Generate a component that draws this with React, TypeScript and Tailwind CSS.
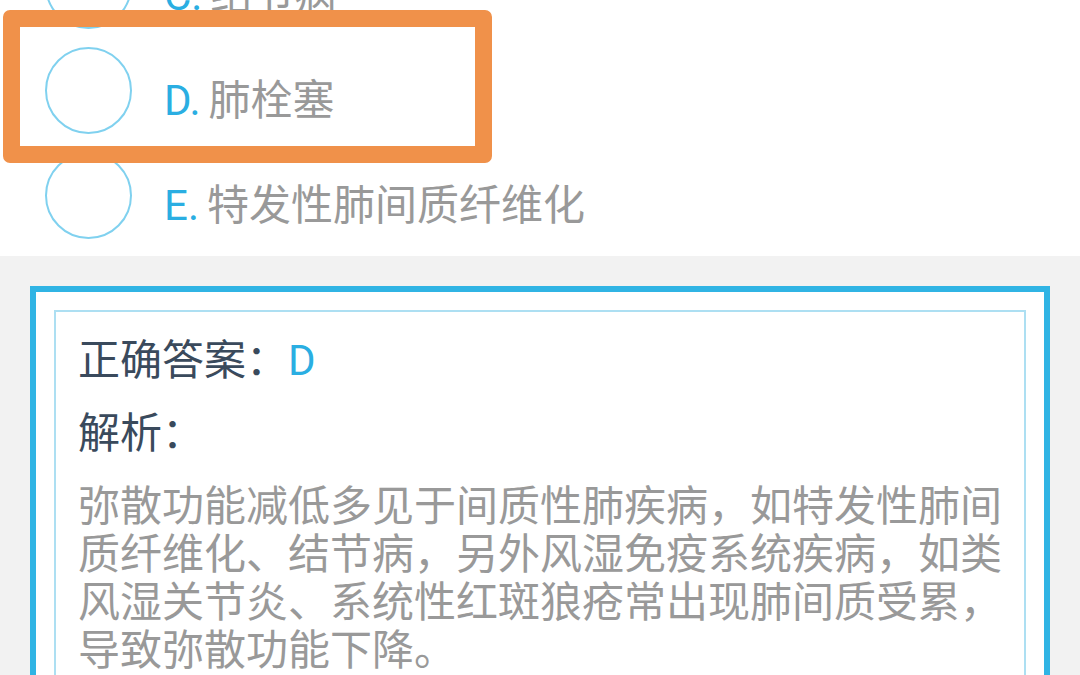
import React from "react";

const font = { fontFamily: 'Roboto, "Noto Sans CJK SC", sans-serif' };

function Option({ letter, text }: { letter: string; text: string }) {
  return (
    <div className="flex h-[105px] items-center">
      <div className="ml-[45px] h-[87px] w-[87px] shrink-0 rounded-full border-2 border-[#80d1ef]" />
      <div className="ml-[32px] mt-[20px] flex whitespace-nowrap text-[42px] leading-[50px]">
        <span className="text-[#2aaee2]">{letter}.</span>
        <span className="ml-[8px] text-[#999999]">{text}</span>
      </div>
    </div>
  );
}

export default function App() {
  return (
    <div className="h-[675px] w-[1080px] overflow-hidden bg-[#f2f2f2]" style={font}>
      <div className="relative h-[256px] overflow-hidden bg-white">
        <div className="mt-[-67px]">
          <Option letter="C" text="结节病" />
          <Option letter="D" text="肺栓塞" />
          <Option letter="E" text="特发性肺间质纤维化" />
        </div>
        <div className="absolute left-[3px] top-[10px] h-[153px] w-[489px] rounded-[7px] border-[17px] border-[#f0914a]" />
      </div>
      <div className="px-[30px] pt-[30px]">
        <div className="h-[500px] border-[6px] border-[#30b4e4] bg-white p-[18px]">
          <div className="flex h-full flex-col gap-[25px] border-2 border-[#addff2] pl-[22px] pr-[20px] pt-[25px]">
            <div className="text-[42px] leading-[48px] text-[#3a4a5c]">
              正确答案：<span className="text-[#2aaee2]">D</span>
            </div>
            <div className="text-[42px] leading-[48px] text-[#3a4a5c]">解析：</div>
            <div className="w-[930px] text-[42px] leading-[48px] text-[#999999]">
              弥散功能减低多见于间质性肺疾病，如特发性肺间质纤维化、结节病，另外风湿免疫系统疾病，如类风湿关节炎、系统性红斑狼疮常出现肺间质受累，导致弥散功能下降。
            </div>
          </div>
        </div>
      </div>
    </div>
  );
}
